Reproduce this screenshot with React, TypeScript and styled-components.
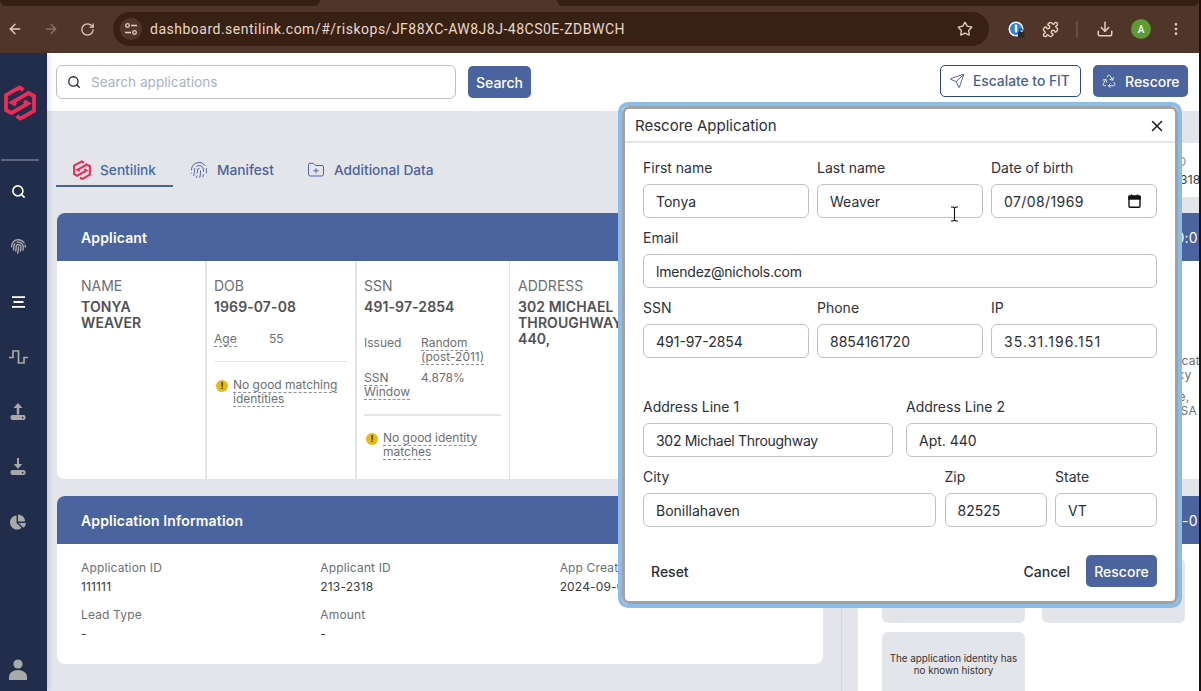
import React from 'react';
import styled, { createGlobalStyle } from 'styled-components';
import {
  ArrowLeft, ArrowRight, RotateCw, Star, Puzzle, Download, Search,
  FolderPlus, Send, Recycle, X, EllipsisVertical, Fingerprint,
} from 'lucide-react';
import { FaFingerprint, FaChartPie } from 'react-icons/fa';

const Global = createGlobalStyle`
  html, body { margin: 0; padding: 0; background: #141414; }
  * { box-sizing: border-box; }
  #root { width: 1201px; height: 691px; overflow: hidden; }
  body { font-family: Inter, "Liberation Sans", sans-serif; }
`;

const Page = styled.div`
  position: relative; width: 1199px; height: 691px; overflow: hidden;
  display: flex; flex-direction: column;
`;

/* browser chrome */
const TabStrip = styled.div`height: 6px; display: flex; background: #4f3629;`;
const DarkTab = styled.div<{ $w: number }>`
  width: ${p => p.$w}px; background: #351f11;
  border-radius: 0 0 8px 8px;
`;
const ActiveGap = styled.div`flex: 0 0 237px;`;
const Toolbar = styled.div`
  height: 47px; background: #4f3629; display: flex; align-items: center;
  padding: 0 0 1px 0; color: #e6cfbd;
`;
const ChromeBtn = styled.span<{ $dim?: boolean; $w?: number }>`
  width: ${p => p.$w ?? 36}px; flex: none; display: flex; align-items: center; justify-content: center;
  color: ${p => (p.$dim ? '#8a7261' : '#e6cfbd')};
`;
const PuzzleBtn = styled(ChromeBtn)`margin-left: 17px;`;
const UrlPill = styled.div`
  margin-left: 11px; width: 876px; height: 34px; border-radius: 17px; background: #382113;
  display: flex; align-items: center; padding: 0 16px 0 7px;
`;
const TuneChip = styled.span`
  width: 22px; height: 22px; border-radius: 50%; background: #4f3629;
  display: flex; align-items: center; justify-content: center;
`;
const UrlText = styled.span`
  margin-left: 8px; flex: 1; font: 400 14px Roboto, sans-serif; letter-spacing: .5px; color: #ead8ca;
`;
const ToolGroup = styled.div`display: flex; align-items: center; margin-left: 10px;`;
const ToolDivider = styled.span`width: 2px; height: 16px; background: #6a4f3f; margin: 0 18px 0 17px;`;
const Avatar = styled.span`
  width: 20px; height: 20px; border-radius: 50%; background: #5c9c33; color: #fff;
  font: 500 10px Roboto, sans-serif; display: flex; align-items: center; justify-content: center;
  margin: 0 17px;
`;
const PassIcon = styled.span`position: relative; width: 16px; height: 16px; margin-left: 9px; display: block;`;

/* app */
const AppRow = styled.div`flex: 1; display: flex; min-height: 0;`;
const Sidebar = styled.nav`
  position: relative; z-index: 2;
  width: 47px; background: #222c4b; display: flex; flex-direction: column;
  box-shadow: 3px 0 4px rgba(20, 30, 60, .1); padding-top: 32px;
`;
const LogoCell = styled.div`width: 40px; display: flex; justify-content: center;`;
const SideRule = styled.hr`
  width: 38px; height: 2px; border: 0; background: #5d6880; margin: 38px 0 3px 1px;
`;
const SideItem = styled.div<{ $on?: boolean }>`
  height: 55px; width: 36px; display: flex; align-items: center; justify-content: center;
  color: ${p => (p.$on ? '#fff' : '#a8a9ab')};
`;
const SideBottom = styled.div`
  margin-top: auto; height: 32px; width: 36px; display: flex; justify-content: center; color: #a8a9ab;
`;

const Main = styled.div`flex: 1; min-width: 0; display: flex; flex-direction: column;`;
const TopBar = styled.header`
  height: 58px; background: #fff; display: flex; align-items: center; padding: 0 11px 0 9px;
`;
const SearchBox = styled.div`
  width: 400px; height: 34px; border: 1px solid #bdbfc4; border-radius: 6px;
  display: flex; align-items: center; padding-left: 10px; gap: 10px; color: #1f2430;
`;
const Placeholder = styled.span`font-size: 13.6px; color: #a9b1c6;`;
const PrimaryButton = styled.button`
  border: 0; background: #4b639e; color: #fff; border-radius: 5px;
  height: 32px; font: 500 14px Inter, sans-serif; padding: 0 8px; white-space: nowrap;
  display: flex; align-items: center; gap: 8px;
`;
const SearchButton = styled(PrimaryButton)`margin-left: 12px; width: 63px; justify-content: center;`;
const TopActions = styled.div`margin: 0 0 2px auto; display: flex; gap: 12px;`;
const OutlineButton = styled.button`
  height: 32px; width: 141px; border: 1px solid #2c477f; background: #fff; border-radius: 5px; white-space: nowrap;
  color: #4b5f8f; font: 500 13.8px Inter, sans-serif; display: flex; align-items: center; gap: 8px; padding: 0 8px;
`;
const RescoreTop = styled(PrimaryButton)`width: 95px; padding: 0 8px;`;

const Body = styled.div`flex: 1; min-height: 0; background: #e4e5ea; display: flex; overflow: hidden;`;
const LeftCol = styled.div`width: 766px; margin-left: 10px; flex: none;`;
const Tabs = styled.div`margin-top: 46px; height: 30px; display: flex; margin-left: -1px;`;
const Tab = styled.div<{ $on?: boolean; $w: number }>`
  width: ${p => p.$w}px; padding-left: 17px; height: 30px; white-space: nowrap;
  display: flex; align-items: center; gap: 9px; padding-bottom: 2px;
  font-size: 13.7px; font-weight: 500; color: ${p => (p.$on ? '#3f6bad' : '#4b639e')};
  border-bottom: 2px solid ${p => (p.$on ? '#4b639e' : 'transparent')};
  svg { flex: none; }
`;
const Card = styled.section<{ $h: number }>`
  height: ${p => p.$h}px; background: #fff; border-radius: 8px; overflow: hidden; margin-top: 17px;
  display: flex; flex-direction: column;
`;
const FirstCard = styled(Card)`margin-top: 26px;`;
const CardHead = styled.div`
  height: 48px; flex: none; background: #4b639e; color: #fff; font-size: 14px; font-weight: 600; letter-spacing: .15px;
  display: flex; align-items: center; padding-left: 24px;
`;
const Columns = styled.div`flex: 1; display: flex;`;
const Col = styled.div<{ $w: number; $pl: number; $rule?: number }>`
  width: ${p => p.$w}px; flex: none; padding: 16px 8px 0 ${p => p.$pl}px;
  border-right: ${p => p.$rule ?? 0}px solid #e4e5ea;
`;
const ColLabel = styled.div`font-size: 14px; line-height: 18px; color: #6d6f73; height: 20px;`;
const ColValue = styled.div`font-size: 14px; line-height: 16px; font-weight: 600; letter-spacing: .1px; color: #505154; text-transform: uppercase; margin-top: 2px;`;
const MiniRow = styled.div<{ $mt: number; $first?: number }>`
  display: grid; grid-template-columns: ${p => p.$first ?? 57}px 1fr; font-size: 12px; line-height: 14px; color: #6d6f73; margin-top: ${p => p.$mt}px;
`;
const Dotted = styled.span`border-bottom: 1px dashed #8d8f93; `;
const Rule = styled.div<{ $mt: number; $h: number }>`
  height: ${p => p.$h}px; background: #e4e5ea; margin-top: ${p => p.$mt}px;
`;
const WarnRow = styled.div<{ $mt: number }>`
  display: flex; gap: 5px; margin: ${p => p.$mt}px 0 0 2px; font-size: 12px; line-height: 14px; color: #6d6f73;
`;
const WarnDot = styled.span`
  width: 12px; height: 12px; flex: none; border-radius: 50%; background: #e8b90f; color: #3b3000;
  font-size: 9px; font-weight: 700; line-height: 12px; text-align: center; margin-top: 2px;
`;

const InfoGrid = styled.div`
  padding: 15px 24px 0; display: grid; grid-template-columns: repeat(3, 1fr); row-gap: 10px;
`;
const InfoCell = styled.div`font-size: 12px; line-height: 18px; letter-spacing: .15px;`;
const InfoLabel = styled.div`color: #6d6f73; height: 19px;`;
const InfoValue = styled.div`color: #3a3b3e;`;

const RightCol = styled.aside`
  width: 358px; flex: none; margin-left: 18px; border-left: 1px solid #d8d9de; padding-left: 16px;
`;
const Strip = styled.div`
  margin-top: 32px; height: 54px; background: #fff; font-size: 12px; line-height: 18px; padding: 10px 0 0 289px; color: #3a3b3e; letter-spacing: .2px; white-space: nowrap;
`;
const StripLabel = styled.div`color: #8d8f93;`;
const SideCard = styled.div<{ $h?: number; $mt: number }>`
  background: #fff; margin-top: ${p => p.$mt}px; ${p => (p.$h ? `height: ${p.$h}px;` : '')}
`;
const SideHead = styled.div`
  height: 48px; background: #4b639e; color: #fff; font-size: 14px; display: flex; align-items: center; justify-content: flex-end; padding-right: 1px; letter-spacing: .3px;
`;
const SideText = styled.div<{ $mt: number }>`
  margin-top: ${p => p.$mt}px; padding-left: 293px; font-size: 12px; line-height: 14px; color: #6d6f73; letter-spacing: .3px; white-space: nowrap;
`;
const NoteGrid = styled.div`
  padding: 14px 16px 0 24px; display: grid; grid-template-columns: 143px 143px; gap: 9px 17px;
`;
const Note = styled.div`
  height: 65px; background: #e4e5ea; border-radius: 6px; font-size: 9.8px; line-height: 12px; color: #333; text-align: center;
  display: flex; align-items: center; justify-content: center; padding: 0 7px;
`;

/* modal */
const Ring = styled.div`
  position: absolute; left: 618px; top: 102px; width: 564px; height: 506px;
  border: 4px solid #8bbcea; border-radius: 10px; z-index: 5;
`;
const Modal = styled.div`
  width: 100%; height: 100%; background: #fff; border: 3px solid #a2a2a2; border-radius: 7px;
  display: flex; flex-direction: column;
`;
const ModalHead = styled.div`
  height: 34px; flex: none; border-bottom: 2px solid #e4e5ea; display: flex; align-items: center; justify-content: space-between;
  padding: 1px 9px 0 10px; font-size: 15px; color: #2c2f36;
`;
const Form = styled.form`padding: 15px 18px 0; display: flex; flex-direction: column; flex: 1;`;
const FieldRow = styled.div<{ $cols: string; $gap?: number; $mt?: number }>`
  display: grid; grid-template-columns: ${p => p.$cols}; column-gap: ${p => p.$gap ?? 8}px; margin-top: ${p => p.$mt ?? 10}px;
`;
const FirstRow = styled(FieldRow)`margin-top: 0;`;
const Field = styled.label`display: block; min-width: 0;`;
const FieldLabel = styled.span`display: block; font-size: 14px; line-height: 20px; margin-bottom: 6px; color: #2f323a;`;
const InputBox = styled.span<{ $ls?: number }>`
  height: 34px; border: 1px solid #c0c1c5; border-radius: 6px; display: flex; align-items: center; justify-content: space-between;
  padding: 0 12px; font-size: 14px; color: #2b2d33; white-space: nowrap;
  letter-spacing: ${p => p.$ls ?? 0}px;
`;
const CalendarGlyph = styled.svg`margin-right: 3px;`;
const ModalFoot = styled.div`margin-top: 28px; display: flex; align-items: center;`;
const TextButton = styled.button`
  border: 0; background: none; font: 500 14px Inter, sans-serif; color: #2b2e38; padding: 0 8px;
`;
const CancelButton = styled(TextButton)`margin-left: auto; margin-right: 8px;`;
const ModalRescore = styled(PrimaryButton)`width: 71px; justify-content: center;`;
const Beam = styled.svg`position: absolute; left: 950px; top: 206px; z-index: 6;`;

const Logo = ({ size }: { size: number }) => (
  <svg width={size} height={size * 36 / 32} viewBox="0 0 32 36" fill="none" stroke="#f02c55" strokeWidth="3.8" strokeLinejoin="miter">
    <path d="M19.5 4.8 15.5 2.5 2 10v15l5.5 3L24 18.5 20 16.2" />
    <path d="M12.5 31.2l4 2.3L30 26V11l-5.5-3L8 17.5l4 2.3" />
  </svg>
);

const SideUpload = ({ down }: { down?: boolean }) => (
  <svg width="16" height="18" viewBox="0 0 16 18" fill="currentColor">
    <rect x="0.5" y="12" width="15" height="5" rx="2" />
    {down
      ? <path d="M7 0h2v6h3.2L8 11 3.8 6H7z" />
      : <path d="M8 0l4.5 5H9.2v6.5H6.8V5H3.5z" />}
    <circle cx="12.6" cy="14.6" r=".9" fill="#222c4b" />
  </svg>
);

const Field1 = ({ label, value, ls, children }: { label: string; value: string; ls?: number; children?: React.ReactNode }) => (
  <Field>
    <FieldLabel>{label}</FieldLabel>
    <InputBox $ls={ls}>{value}{children}</InputBox>
  </Field>
);

export default function App() {
  return (
    <Page>
      <Global />
      <TabStrip>
        <DarkTab $w={320} />
        <ActiveGap />
        <DarkTab $w={642} />
      </TabStrip>
      <Toolbar>
        <ChromeBtn $w={30}><ArrowLeft size={16} /></ChromeBtn>
        <ChromeBtn $w={42} $dim><ArrowRight size={16} /></ChromeBtn>
        <ChromeBtn $w={30}><RotateCw size={15} /></ChromeBtn>
        <UrlPill>
          <TuneChip>
            <svg width="14" height="14" viewBox="0 0 14 14" fill="none" stroke="#e6cfbd" strokeWidth="1.3">
              <circle cx="3.5" cy="3.5" r="1.8" /><path d="M7 3.5h6M1 10.5h6" /><circle cx="10.5" cy="10.5" r="1.8" />
            </svg>
          </TuneChip>
          <UrlText>dashboard.sentilink.com/#/riskops/JF88XC-AW8J8J-48CS0E-ZDBWCH</UrlText>
          <Star size={16} color="#e6cfbd" />
        </UrlPill>
        <ToolGroup>
          <PassIcon>
            <svg width="18" height="18" viewBox="0 0 18 18">
              <circle cx="8" cy="8" r="7.5" fill="#fff" />
              <circle cx="8" cy="8" r="6" fill="#2f7fe0" />
              <rect x="6.8" y="3.6" width="2.4" height="8" rx="1" fill="#fff" />
              <rect x="10" y="11" width="6.5" height="5.5" rx="1" fill="#2a2a2a" />
              <path d="M11.5 11V9.5a1.8 1.8 0 0 1 3.5 0V11" fill="none" stroke="#2a2a2a" strokeWidth="1" />
            </svg>
          </PassIcon>
          <PuzzleBtn $w={18}><Puzzle size={17} /></PuzzleBtn>
          <ToolDivider />
          <ChromeBtn $w={18}><Download size={18} /></ChromeBtn>
          <Avatar>A</Avatar>
          <ChromeBtn $w={16}><EllipsisVertical size={16} /></ChromeBtn>
        </ToolGroup>
      </Toolbar>
      <AppRow>
        <Sidebar>
          <LogoCell><Logo size={32} /></LogoCell>
          <SideRule />
          <SideItem $on><Search size={15} strokeWidth={2.6} /></SideItem>
          <SideItem><FaFingerprint size={15} /></SideItem>
          <SideItem $on>
            <svg width="15" height="12" viewBox="0 0 15 12" stroke="currentColor" strokeWidth="1.8">
              <path d="M1 1.2h13M2.5 6h10M1 10.8h13" />
            </svg>
          </SideItem>
          <SideItem>
            <svg width="19" height="14" viewBox="0 0 19 14" fill="none" stroke="currentColor" strokeWidth="1.7">
              <path d="M0 7.5h4V1h5.5v12H15V7.5h4" />
            </svg>
          </SideItem>
          <SideItem><SideUpload /></SideItem>
          <SideItem><SideUpload down /></SideItem>
          <SideItem><FaChartPie size={16} /></SideItem>
          <SideBottom>
            <svg width="18" height="21" viewBox="0 0 18 21" fill="currentColor">
              <circle cx="9" cy="5" r="4.6" /><path d="M0 21v-3c0-4 4-7 9-7s9 3 9 7v3z" />
            </svg>
          </SideBottom>
        </Sidebar>
        <Main>
          <TopBar>
            <SearchBox>
              <Search size={14} strokeWidth={2.2} />
              <Placeholder>Search applications</Placeholder>
            </SearchBox>
            <SearchButton>Search</SearchButton>
            <TopActions>
              <OutlineButton><Send size={16} strokeWidth={1.4} />Escalate to FIT</OutlineButton>
              <RescoreTop><Recycle size={16} strokeWidth={1.3} />Rescore</RescoreTop>
            </TopActions>
          </TopBar>
          <Body>
            <LeftCol>
              <Tabs>
                <Tab $on $w={117}><Logo size={18} />Sentilink</Tab>
                <Tab $w={117}><Fingerprint size={18} strokeWidth={1.3} />Manifest</Tab>
                <Tab $w={170}><FolderPlus size={18} strokeWidth={1.3} />Additional Data</Tab>
              </Tabs>
              <FirstCard $h={266}>
                <CardHead>Applicant</CardHead>
                <Columns>
                  <Col $w={150} $pl={24} $rule={2}>
                    <ColLabel>NAME</ColLabel>
                    <ColValue>Tonya<br />Weaver</ColValue>
                  </Col>
                  <Col $w={150} $pl={7} $rule={2}>
                    <ColLabel>DOB</ColLabel>
                    <ColValue>1969-07-08</ColValue>
                    <MiniRow $mt={17} $first={55}>
                      <span><Dotted>Age</Dotted></span><span>55</span>
                    </MiniRow>
                    <Rule $mt={15} $h={1} />
                    <WarnRow $mt={16}>
                      <WarnDot>!</WarnDot>
                      <span><Dotted>No good matching</Dotted><br /><Dotted>identities</Dotted></span>
                    </WarnRow>
                  </Col>
                  <Col $w={153} $pl={7} $rule={1}>
                    <ColLabel>SSN</ColLabel>
                    <ColValue>491-97-2854</ColValue>
                    <MiniRow $mt={21}>
                      <span>Issued</span>
                      <span><Dotted>Random</Dotted><br /><Dotted>(post-2011)</Dotted></span>
                    </MiniRow>
                    <MiniRow $mt={7}>
                      <span><Dotted>SSN</Dotted><br /><Dotted>Window</Dotted></span>
                      <span>4.878%</span>
                    </MiniRow>
                    <Rule $mt={15} $h={2} />
                    <WarnRow $mt={15}>
                      <WarnDot>!</WarnDot>
                      <span><Dotted>No good identity</Dotted><br /><Dotted>matches</Dotted></span>
                    </WarnRow>
                  </Col>
                  <Col $w={160} $pl={8}>
                    <ColLabel>ADDRESS</ColLabel>
                    <ColValue>302 Michael<br />Throughway<br />440,</ColValue>
                  </Col>
                </Columns>
              </FirstCard>
              <Card $h={168}>
                <CardHead>Application Information</CardHead>
                <InfoGrid>
                  <InfoCell><InfoLabel>Application ID</InfoLabel><InfoValue>111111</InfoValue></InfoCell>
                  <InfoCell><InfoLabel>Applicant ID</InfoLabel><InfoValue>213-2318</InfoValue></InfoCell>
                  <InfoCell><InfoLabel>App Created</InfoLabel><InfoValue>2024-09-01</InfoValue></InfoCell>
                  <InfoCell><InfoLabel>Lead Type</InfoLabel><InfoValue>-</InfoValue></InfoCell>
                  <InfoCell><InfoLabel>Amount</InfoLabel><InfoValue>-</InfoValue></InfoCell>
                </InfoGrid>
              </Card>
            </LeftCol>
            <RightCol>
              <Strip>
                <StripLabel>App ID</StripLabel>
                213-2318
              </Strip>
              <SideCard $h={266} $mt={16}>
                <SideHead>00:00:0</SideHead>
                <SideText $mt={93}>Duplicat<br />Galaxy</SideText>
                <SideText $mt={8}>Home,<br />VT USA</SideText>
              </SideCard>
              <SideCard $mt={17}>
                <SideHead>2024-09-0</SideHead>
                <NoteGrid>
                  <Note>The application identity has no known history</Note>
                  <Note>The identity has not been seen before</Note>
                  <Note>The application identity has no known history</Note>
                </NoteGrid>
              </SideCard>
            </RightCol>
          </Body>
        </Main>
      </AppRow>

      <Ring>
        <Modal>
          <ModalHead>
            Rescore Application
            <X size={18} strokeWidth={2} color="#1b1d22" />
          </ModalHead>
          <Form>
            <FirstRow $cols="repeat(3, 1fr)">
              <Field1 label="First name" value="Tonya" />
              <Field1 label="Last name" value="Weaver" />
              <Field1 label="Date of birth" value="07/08/1969" ls={0.4}>
                <CalendarGlyph width="13" height="14" viewBox="0 0 13 14" fill="none" stroke="#111" strokeWidth="1.4">
                  <rect x="1" y="2.2" width="11" height="11" rx="1" />
                  <rect x="1" y="2.2" width="11" height="2.8" fill="#111" />
                  <path d="M3.5 .5v2M9.5 .5v2" />
                </CalendarGlyph>
              </Field1>
            </FirstRow>
            <FieldRow $cols="1fr"><Field1 label="Email" value="lmendez@nichols.com" ls={-0.2} /></FieldRow>
            <FieldRow $cols="repeat(3, 1fr)">
              <Field1 label="SSN" value="491-97-2854" />
              <Field1 label="Phone" value="8854161720" />
              <Field1 label="IP" value="35.31.196.151" ls={1.1} />
            </FieldRow>
            <FieldRow $cols="250px 251px" $gap={13} $mt={39}>
              <Field1 label="Address Line 1" value="302 Michael Throughway" ls={-0.3} />
              <Field1 label="Address Line 2" value="Apt. 440" />
            </FieldRow>
            <FieldRow $cols="293px 102px 102px" $gap={8.5}>
              <Field1 label="City" value="Bonillahaven" />
              <Field1 label="Zip" value="82525" />
              <Field1 label="State" value="VT" />
            </FieldRow>
            <ModalFoot>
              <TextButton type="button">Reset</TextButton>
              <CancelButton type="button">Cancel</CancelButton>
              <ModalRescore type="button">Rescore</ModalRescore>
            </ModalFoot>
          </Form>
        </Modal>
      </Ring>
      <Beam width="9" height="16" viewBox="0 0 9 16" fill="none" stroke="#111" strokeWidth="1.1">
        <path d="M1 1h2l1.5 1L6 1h2M4.5 2v12M1 15h2l1.5-1L6 15h2" />
      </Beam>
    </Page>
  );
}
